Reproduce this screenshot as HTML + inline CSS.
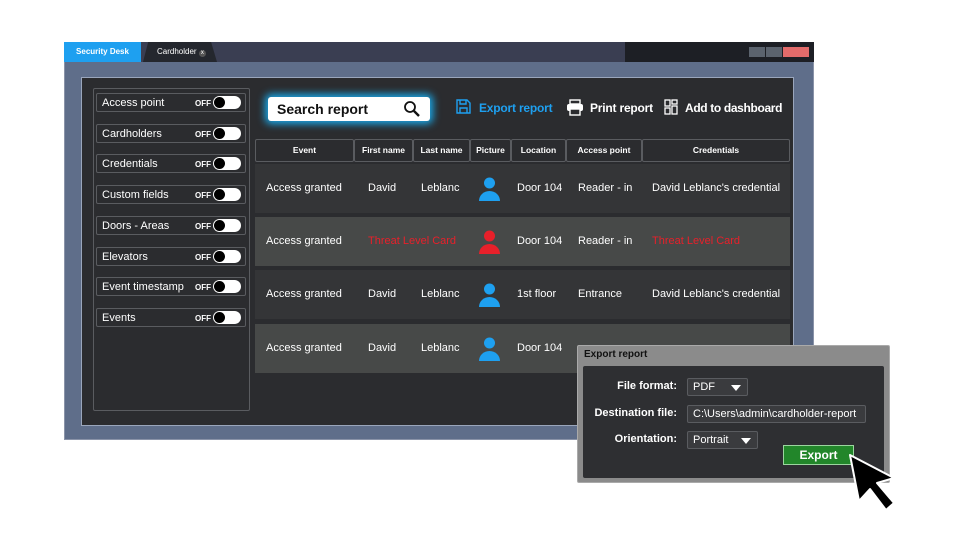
<!DOCTYPE html>
<html><head><style>
*{margin:0;padding:0;box-sizing:border-box}
body{width:960px;height:540px;background:#fff;position:relative;overflow:hidden;font-family:"Liberation Sans",sans-serif;color:#fff}
.a{position:absolute}
.tg{position:absolute;left:96px;width:150px;height:19px;border:1px solid #5a5c60;border-radius:2px;background:#2b2c2f;font-size:11px;line-height:19px;padding-left:5px}
.tg .off{position:absolute;left:98px;top:1px;font-size:8px;font-weight:bold;line-height:17px}
.tg .sw{position:absolute;left:116px;top:2px;width:28px;height:13px;background:#fff;border-radius:7px}
.tg .sw:before{content:"";position:absolute;left:1px;top:1px;width:11px;height:11px;border-radius:50%;background:#000}
.hd{position:absolute;top:139px;height:23px;border:1px solid #5a5c60;border-radius:2px;font-size:8.5px;font-weight:bold;text-align:center;line-height:21px;background:#2b2c2f}
.row{position:absolute;left:255px;width:535px;height:49px}
.row span{position:absolute;top:0;line-height:49px;font-size:11px}
.red{color:#e8202a}
.lab{position:absolute;font-size:11px;font-weight:bold;text-align:right;width:92px;left:585px}
.fld{position:absolute;background:#3a3b3e;border:1px solid #5a5c60;border-radius:2px;font-size:11px;line-height:16px;padding-left:5px;height:18px}
.tri{position:absolute;right:6px;top:6px;border-left:5px solid transparent;border-right:5px solid transparent;border-top:6px solid #fff}
</style></head><body>
<div class="a" style="left:64px;top:42px;width:750px;height:398px;background:#5f6e8a;border:1px solid #8a93a8"></div>
<div class="a" style="left:64px;top:42px;width:750px;height:20px;background:#3a3e52"></div>
<div class="a" style="left:625px;top:42px;width:189px;height:20px;background:#1d1f25"></div>
<div class="a" style="left:749px;top:47px;width:16px;height:10px;background:#5b636e"></div>
<div class="a" style="left:766px;top:47px;width:16px;height:10px;background:#5b636e"></div>
<div class="a" style="left:783px;top:47px;width:26px;height:10px;background:#e36b6b"></div>
<div class="a" style="left:64px;top:42px;width:77px;height:20px;background:#1ea0f0;font-size:8px;font-weight:bold;line-height:20px;text-align:center">Security Desk</div>
<div class="a" style="left:143px;top:42px;width:74px;height:20px;background:#24272e;clip-path:polygon(7% 0,92% 0,100% 100%,0 100%);font-size:8px;line-height:20px;padding-left:14px">Cardholder <span style="display:inline-block;width:7px;height:7px;border-radius:50%;background:#555;font-size:6px;line-height:7px;text-align:center">x</span></div>
<div class="a" style="left:81px;top:77px;width:713px;height:349px;background:#2b2c2f;border:1px solid #9aa6bc"></div>
<div class="a" style="left:93px;top:88px;width:157px;height:323px;border:1px solid #5a5c60;border-radius:2px"></div>
<div class="tg" style="top:93px">Access point<span class="off">OFF</span><span class="sw"></span></div>
<div class="tg" style="top:124px">Cardholders<span class="off">OFF</span><span class="sw"></span></div>
<div class="tg" style="top:154px">Credentials<span class="off">OFF</span><span class="sw"></span></div>
<div class="tg" style="top:185px">Custom fields<span class="off">OFF</span><span class="sw"></span></div>
<div class="tg" style="top:216px">Doors - Areas<span class="off">OFF</span><span class="sw"></span></div>
<div class="tg" style="top:247px">Elevators<span class="off">OFF</span><span class="sw"></span></div>
<div class="tg" style="top:277px">Event timestamp<span class="off">OFF</span><span class="sw"></span></div>
<div class="tg" style="top:308px">Events<span class="off">OFF</span><span class="sw"></span></div>
<div class="a" style="left:268px;top:97px;width:162px;height:24px;background:#fff;border-radius:3px;box-shadow:0 0 8px 3px #1aa8e8;color:#111;font-size:14px;font-weight:bold;line-height:24px;padding-left:9px">Search report
<svg class="a" style="left:135px;top:3px" width="18" height="18" viewBox="0 0 18 18"><circle cx="7" cy="7" r="5" fill="none" stroke="#111" stroke-width="1.8"/><path d="M11 11l5 5" stroke="#111" stroke-width="2.4"/></svg></div>
<svg class="a" style="left:456px;top:99px" width="15" height="15" viewBox="0 0 15 15"><path d="M1 1h10l3 3v10H1z M4 1v4h6V1 M4 14V9h7v5" fill="none" stroke="#1ea0f0" stroke-width="1.4"/></svg>
<div class="a" style="left:479px;top:101px;font-size:12px;font-weight:bold;color:#1ea0f0;letter-spacing:-0.2px">Export report</div>
<svg class="a" style="left:566px;top:99px" width="18" height="17" viewBox="0 0 18 17"><rect x="4" y="1" width="10" height="4" fill="none" stroke="#fff" stroke-width="1.4"/><rect x="1" y="5" width="16" height="7" rx="2" fill="#fff"/><rect x="4" y="10" width="10" height="6" fill="#2b2c2f" stroke="#fff" stroke-width="1.4"/></svg>
<div class="a" style="left:590px;top:101px;font-size:12px;font-weight:bold;letter-spacing:-0.2px">Print report</div>
<svg class="a" style="left:664px;top:99px" width="14" height="16" viewBox="0 0 14 16"><g fill="none" stroke="#fff" stroke-width="1.3"><rect x="1" y="1" width="5" height="6"/><rect x="8" y="1" width="5" height="4"/><rect x="1" y="9" width="5" height="6"/><rect x="8" y="7" width="5" height="8"/></g></svg>
<div class="a" style="left:685px;top:101px;font-size:12px;font-weight:bold;letter-spacing:-0.35px">Add to dashboard</div>
<div class="hd" style="left:255px;width:99px">Event</div>
<div class="hd" style="left:354px;width:59px">First name</div>
<div class="hd" style="left:413px;width:57px">Last name</div>
<div class="hd" style="left:470px;width:41px">Picture</div>
<div class="hd" style="left:511px;width:55px">Location</div>
<div class="hd" style="left:566px;width:76px">Access point</div>
<div class="hd" style="left:642px;width:148px">Credentials</div>
<div class="row" style="top:164px;background:#343537"><span style="left:11px">Access granted</span><span style="left:113px">David</span><span style="left:166px">Leblanc</span><span style="left:262px">Door 104</span><span style="left:323px">Reader - in</span><span style="left:397px">David Leblanc's credential</span></div>
<div class="row" style="top:217px;background:#474948"><span style="left:11px">Access granted</span><span class="red" style="left:113px">Threat Level Card</span><span style="left:262px">Door 104</span><span style="left:323px">Reader - in</span><span class="red" style="left:397px">Threat Level Card</span></div>
<div class="row" style="top:270px;background:#343537"><span style="left:11px">Access granted</span><span style="left:113px">David</span><span style="left:166px">Leblanc</span><span style="left:262px">1st floor</span><span style="left:323px">Entrance</span><span style="left:397px">David Leblanc's credential</span></div>
<div class="row" style="top:324px;background:#474948"><span style="left:11px">Access granted</span><span style="left:113px">David</span><span style="left:166px">Leblanc</span><span style="left:262px">Door 104</span></div>
<svg class="a" style="left:479px;top:177px" width="21" height="24" viewBox="0 0 21 24"><circle cx="10.5" cy="6" r="5.5" fill="#1ea0f0"/><path d="M0 24a10.5 10 0 0 1 21 0z" fill="#1ea0f0"/></svg>
<svg class="a" style="left:479px;top:230px" width="21" height="24" viewBox="0 0 21 24"><circle cx="10.5" cy="6" r="5.5" fill="#e8202a"/><path d="M0 24a10.5 10 0 0 1 21 0z" fill="#e8202a"/></svg>
<svg class="a" style="left:479px;top:283px" width="21" height="24" viewBox="0 0 21 24"><circle cx="10.5" cy="6" r="5.5" fill="#1ea0f0"/><path d="M0 24a10.5 10 0 0 1 21 0z" fill="#1ea0f0"/></svg>
<svg class="a" style="left:479px;top:337px" width="21" height="24" viewBox="0 0 21 24"><circle cx="10.5" cy="6" r="5.5" fill="#1ea0f0"/><path d="M0 24a10.5 10 0 0 1 21 0z" fill="#1ea0f0"/></svg>
<div class="a" style="left:577px;top:345px;width:313px;height:138px;background:#8b8b8b;border:1px solid #aaa;border-radius:2px"></div>
<div class="a" style="left:584px;top:349px;font-size:10px;font-weight:bold;color:#111">Export report</div>
<div class="a" style="left:583px;top:366px;width:301px;height:112px;background:#2e2f32;border-radius:2px"></div>
<div class="lab" style="top:380px">File format:</div>
<div class="lab" style="top:407px">Destination file:</div>
<div class="lab" style="top:433px">Orientation:</div>
<div class="fld" style="left:687px;top:378px;width:61px">PDF<span class="tri"></span></div>
<div class="fld" style="left:687px;top:405px;width:179px">C:\Users\admin\cardholder-report</div>
<div class="fld" style="left:687px;top:431px;width:71px">Portrait<span class="tri"></span></div>
<div class="a" style="left:783px;top:445px;width:71px;height:20px;background:#22862a;border:1px solid #9bd59e;font-size:12px;font-weight:bold;text-align:center;line-height:18px">Export</div>
<svg class="a" style="left:846px;top:452px" width="56" height="62" viewBox="0 0 56 62"><path d="M4 3L48 26L31 31L48 51L40 58L24 37L13 49Z" fill="#000" stroke="#fff" stroke-width="2" stroke-linejoin="round"/></svg>
</body></html>
